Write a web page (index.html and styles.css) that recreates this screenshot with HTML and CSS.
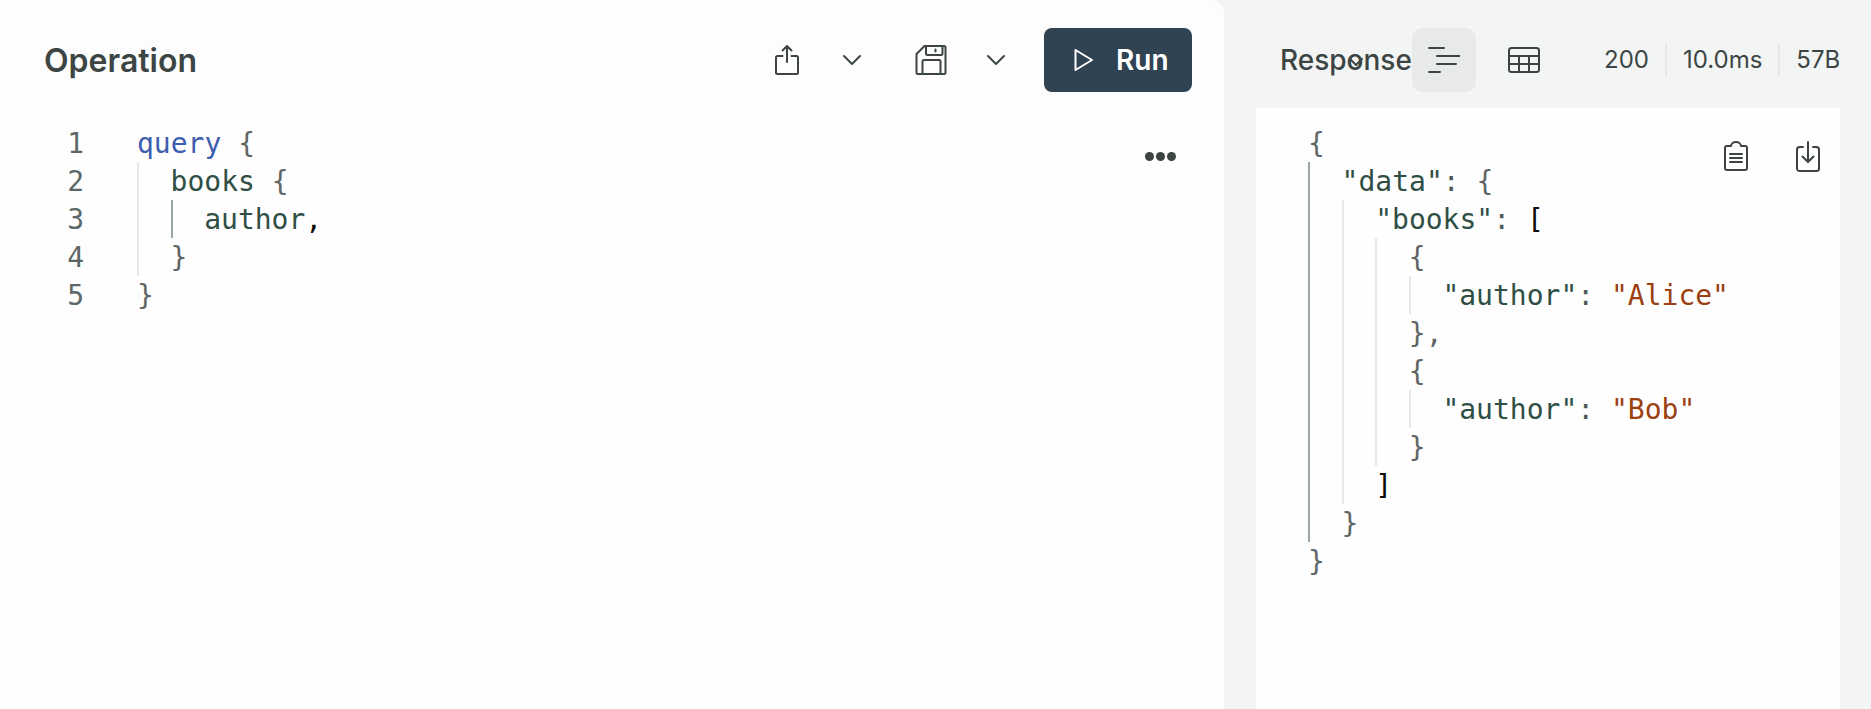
FILE: index.html
```html
<!DOCTYPE html>
<html lang="en">
<head>
<meta charset="utf-8">
<title>Operation</title>
<link rel="stylesheet" href="styles.css">
</head>
<body>
<main class="app">
  <section class="op">
    <header class="op-head">
      <h1 class="title">Operation</h1>
      <div class="tools">
        <div class="pair">
          <span class="ibtn"><svg width="24" height="32" viewBox="0 0 24 32" class="ico"><path d="M12 2V18M7.500 6.500 12 2l4.500 4.500M7.500 12H2.500A1.500 1.500 0 0 0 1 13.500V28.500A1.500 1.500 0 0 0 2.500 30H21.500A1.500 1.500 0 0 0 23 28.500V13.500A1.500 1.500 0 0 0 21.500 12H16.500"/></svg></span>
          <span class="ibtn"><svg width="20" height="12" viewBox="0 0 20 12" class="ico"><path d="M2 2l8 8 8-8"/></svg></span>
        </div>
        <div class="pair">
          <span class="ibtn"><svg width="32" height="32" viewBox="0 0 32 32" class="ico"><path d="M9.500 2H29A1.500 1.500 0 0 1 30.500 3.500V28.500A1.500 1.500 0 0 1 29 30H3A1.500 1.500 0 0 1 1.500 28.500V10ZM11 2V9.500A1.500 1.500 0 0 0 12.500 11H26A1.500 1.500 0 0 0 27.500 9.500V2M7.500 30V17.500A1.500 1.500 0 0 1 9 16H24A1.500 1.500 0 0 1 25.500 17.500V30M20.500 5.500V7.500"/></svg></span>
          <span class="ibtn"><svg width="20" height="12" viewBox="0 0 20 12" class="ico"><path d="M2 2l8 8 8-8"/></svg></span>
        </div>
        <button class="run" type="button"><svg width="20" height="24" viewBox="0 0 20 24" class="play"><path d="M1.500 2 18 12 1.500 22Z"/></svg><span>Run</span></button>
      </div>
    </header>
    <div class="editor">
      <span class="dots"><i></i><i></i><i></i></span>
      <div class="row"><span class="num">1</span><span class="code"><span class="line"><span class="kw">query</span> <span class="br">{</span></span></span></div>
      <div class="row"><span class="num">2</span><span class="code"><span class="guide"></span><span class="line"><span class="nm">books</span> <span class="br">{</span></span></span></div>
      <div class="row"><span class="num">3</span><span class="code"><span class="guide"></span><span class="guide on"></span><span class="line"><span class="nm">author</span><span class="pn">,</span></span></span></div>
      <div class="row"><span class="num">4</span><span class="code"><span class="guide"></span><span class="line"><span class="br">}</span></span></span></div>
      <div class="row"><span class="num">5</span><span class="code"><span class="line"><span class="br">}</span></span></span></div>
    </div>
  </section>
  <section class="res">
    <header class="res-head">
      <h2 class="res-title">Response<svg width="16" height="10" viewBox="0 0 16 10" class="ico over"><path d="M2 2l6 6 6-6"/></svg></h2>
      <span class="tog active"><svg width="32" height="26" viewBox="0 0 32 26" class="ico"><path d="M1 1H16M9 9H32M9 17H28M1 25H12"/></svg></span>
      <span class="tog"><svg width="32" height="26" viewBox="0 0 32 26" class="ico"><rect x="1" y="1" width="30" height="24" rx="2.500"/><path d="M1 9H31M1 17H31M11 9V25M21 9V25"/></svg></span>
      <div class="stats"><span>200</span><span>10.0ms</span><span>57B</span></div>
    </header>
    <div class="output">
      <div class="acts">
        <svg width="24" height="30" viewBox="0 0 24 30" class="ico"><path d="M7 5H3A2 2 0 0 0 1 7V27A2 2 0 0 0 3 29H21A2 2 0 0 0 23 27V7A2 2 0 0 0 21 5H17A5 4 0 0 0 7 5ZM6 13H18M6 17H18M6 21H18"/></svg>
        <svg width="24" height="31" viewBox="0 0 24 31" class="ico"><path d="M7 6H3.500A2.500 2.500 0 0 0 1 8.500V27.500A2.500 2.500 0 0 0 3.500 30H20.500A2.500 2.500 0 0 0 23 27.500V8.500A2.500 2.500 0 0 0 20.500 6H17M12 1V21M6.500 15.500 12 21l5.500-5.500"/></svg>
      </div>
      <div class="jrow"><span class="line"><span class="br">{</span></span></div>
      <div class="jrow"><span class="guide on"></span><span class="line"><span class="nm">"data"</span><span class="cl">:</span> <span class="br">{</span></span></div>
      <div class="jrow"><span class="guide on"></span><span class="guide"></span><span class="line"><span class="nm">"books"</span><span class="cl">:</span> <span class="pn">[</span></span></div>
      <div class="jrow"><span class="guide on"></span><span class="guide"></span><span class="guide"></span><span class="line"><span class="br">{</span></span></div>
      <div class="jrow"><span class="guide on"></span><span class="guide"></span><span class="guide"></span><span class="guide"></span><span class="line"><span class="nm">"author"</span><span class="cl">:</span> <span class="str">"Alice"</span></span></div>
      <div class="jrow"><span class="guide on"></span><span class="guide"></span><span class="guide"></span><span class="line"><span class="br">},</span></span></div>
      <div class="jrow"><span class="guide on"></span><span class="guide"></span><span class="guide"></span><span class="line"><span class="br">{</span></span></div>
      <div class="jrow"><span class="guide on"></span><span class="guide"></span><span class="guide"></span><span class="guide"></span><span class="line"><span class="nm">"author"</span><span class="cl">:</span> <span class="str">"Bob"</span></span></div>
      <div class="jrow"><span class="guide on"></span><span class="guide"></span><span class="guide"></span><span class="line"><span class="br">}</span></span></div>
      <div class="jrow"><span class="guide on"></span><span class="guide"></span><span class="line"><span class="pn">]</span></span></div>
      <div class="jrow"><span class="guide on"></span><span class="line"><span class="br">}</span></span></div>
      <div class="jrow"><span class="line"><span class="br">}</span></span></div>
    </div>
  </section>
</main>
</body>
</html>
```
FILE: styles.css
```css
* { box-sizing: border-box; }
html, body { margin: 0; height: 100%; overflow: hidden; background: #f3f5f5; }
body { font-family: Inter, "Liberation Sans", sans-serif; color: #3c4543; }
.app { display: flex; height: 709px; }
.ico { fill: none; stroke: #3c4543; stroke-width: 2; stroke-linecap: round; stroke-linejoin: round; display: block; }

.op { width: 1224px; background: #fffefe; border-top-right-radius: 14px; overflow: hidden; display: flex; flex-direction: column; }
.op-head { height: 108px; flex: none; background: #fdfdfe; display: flex; align-items: center; justify-content: space-between; padding: 12px 32px 0 44px; }
.title { margin: 0; font-size: 32px; font-weight: 600; color: #3c4543; }
.tools { display: flex; align-items: center; gap: 15px; }
.pair { display: flex; }
.pair + .pair { margin-left: -1px; }
.ibtn { width: 65px; height: 64px; display: flex; align-items: center; justify-content: center; }
.run { width: 148px; height: 64px; margin-left: 1px; border: 0; border-radius: 8px; background: #304352; color: #fff; display: flex; align-items: center; gap: 22px; padding: 0 0 0 30px; font: 600 28px Inter, "Liberation Sans", sans-serif; }
.play { fill: none; stroke: #fff; stroke-width: 2; stroke-linejoin: round; }

.editor { position: relative; flex: 1; padding-top: 16px; }
.dots { position: absolute; left: 1145px; top: 44px; display: flex; gap: 2px; }
.dots i { width: 9px; height: 9px; border-radius: 50%; background: #3c4543; }
.row { display: flex; height: 38px; }
.num { width: 84px; height: 38px; padding-top: 1px; text-align: right; margin-right: 53px; font: 28px/38px "DejaVu Sans Mono", monospace; color: #5c6868; }
.code, .jrow { display: flex; height: 38px; white-space: pre; font: 28px/38px "DejaVu Sans Mono", monospace; color: #2f4f45; }
.line { height: 38px; padding-top: 1px; }
.guide { width: 33.6px; height: 38px; flex: none; border-left: 2px solid #e6e7e7; }
.guide.on { border-left-color: #9ba7a6; }
.kw { color: #3d5db0; }
.nm { color: #2f4f45; }
.br { color: #5f6666; }
.cl { color: #4f5a5a; }
.pn { color: #0a0a0a; }
.str { color: #9c4012; }

.res { flex: 1; display: flex; flex-direction: column; }
.res-head { height: 108px; flex: none; display: flex; align-items: center; padding: 12px 0 0 56px; }
.res-title { position: relative; margin: 0; font-size: 28px; font-weight: 500; width: 132px; color: #3c4543; white-space: nowrap; }
.over { position: absolute; left: 68px; top: 14px; }
.tog { width: 64px; height: 64px; border-radius: 10px; display: flex; align-items: center; justify-content: center; }
.tog + .tog { margin-left: 16px; }
.active { background: #e8eaea; }
.stats { display: flex; align-items: center; margin-left: 48px; font-size: 24px; color: #3c4543; }
.stats span { height: 32px; line-height: 32px; padding: 0 16px; border-left: 2px solid #e6e8e8; }
.stats span:first-child { border-left: 0; padding-left: 0; }
.stats span:last-child { padding-right: 0; }
.output { position: relative; flex: 1; width: 584px; margin-left: 32px; background: #fffefe; padding: 16px 0 0 52px; }
.acts { position: absolute; right: 20px; top: 33px; display: flex; gap: 48px; }
```
